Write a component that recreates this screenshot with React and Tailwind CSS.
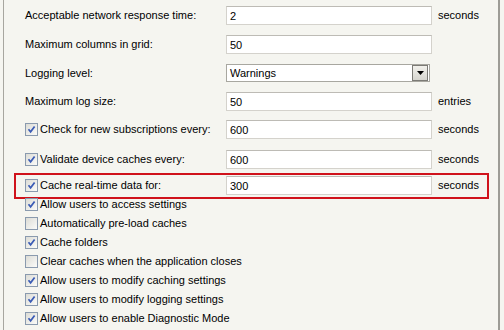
import React from 'react';

const font = { fontFamily: '"Liberation Sans", Arial, sans-serif' };

function Check({ checked }) {
  return (
    <div className="w-[13px] h-[13px] shrink-0 border border-[#8a9aae] bg-gradient-to-br from-[#dcdcd6] to-[#fbfbf9] flex items-center justify-center">
      {checked && (
        <svg width="9" height="9" viewBox="0 0 9 9">
          <path d="M1.5 4.2 L3.6 6.8 L7.6 1.4" fill="none" stroke="#3a5bb5" strokeWidth="1.7" />
        </svg>
      )}
    </div>
  );
}

function Field({ value }) {
  return (
    <div className="w-[206px] h-[19px] shrink-0 bg-white border border-[#d4d2cc] border-t-[#bdbbb5] flex items-center pl-[3px] pt-[1px] text-black">
      {value}
    </div>
  );
}

function Row({ label, value, unit, check, className = '' }) {
  return (
    <div className={'flex items-center h-[19px] ' + className}>
      <div className="w-[201px] flex items-center gap-[2px]">
        {check !== undefined && <Check checked={check} />}
        <span>{label}</span>
      </div>
      <Field value={value} />
      {unit && <span className="ml-[6px]">{unit}</span>}
    </div>
  );
}

export default function App() {
  const options = [
    ['Allow users to access settings', true],
    ['Automatically pre-load caches', false],
    ['Cache folders', true],
    ['Clear caches when the application closes', false],
    ['Allow users to modify caching settings', true],
    ['Allow users to modify logging settings', true],
    ['Allow users to enable Diagnostic Mode', true],
  ];

  return (
    <div className="w-[504px] h-[330px] bg-[#f5f5f0] overflow-hidden flex">
      <div className="ml-[3px] w-[497px] h-full border-l border-r-2 border-l-[#a7a69f] border-r-[#9d9c96] text-[11px] text-black" style={font}>
        <div className="flex flex-col pt-[6px] pl-[21px]">
          <Row label="Acceptable network response time:" value="2" unit="seconds" />
          <Row className="mt-[10px]" label="Maximum columns in grid:" value="50" />
          <div className="flex items-center h-[18px] mt-[10px]">
            <div className="w-[201px]">Logging level:</div>
            <div className="w-[204px] h-[18px] bg-white border border-[#a8a7a0] flex items-center pl-[3px] relative">
              <span>Warnings</span>
              <div className="absolute right-[1px] top-[0px] w-[16px] h-[16px] border border-[#7c7b76] bg-gradient-to-b from-[#f2f1ec] to-[#d6d5cf] flex items-center justify-center">
                <svg width="7" height="4" viewBox="0 0 7 4">
                  <path d="M0 0 H7 L3.5 4 Z" fill="#000" />
                </svg>
              </div>
            </div>
          </div>
          <Row className="mt-[10px]" label="Maximum log size:" value="50" unit="entries" />
          <Row className="mt-[9px]" check label="Check for new subscriptions every:" value="600" unit="seconds" />
          <Row className="mt-[11px]" check label="Validate device caches every:" value="600" unit="seconds" />
          <div className="mt-[4px] ml-[-11px] w-[475px] h-[26px] border-2 border-[#d0121b] pl-[9px] pt-[1px]">
            <Row check label="Cache real-time data for:" value="300" unit="seconds" />
          </div>
          <div className="flex flex-col gap-[6px] mt-[-1px]">
            {options.map(([label, on]) => (
              <div key={label} className="flex items-center gap-[2px] h-[13px]">
                <Check checked={on} />
                <span>{label}</span>
              </div>
            ))}
          </div>
        </div>
      </div>
    </div>
  );
}
